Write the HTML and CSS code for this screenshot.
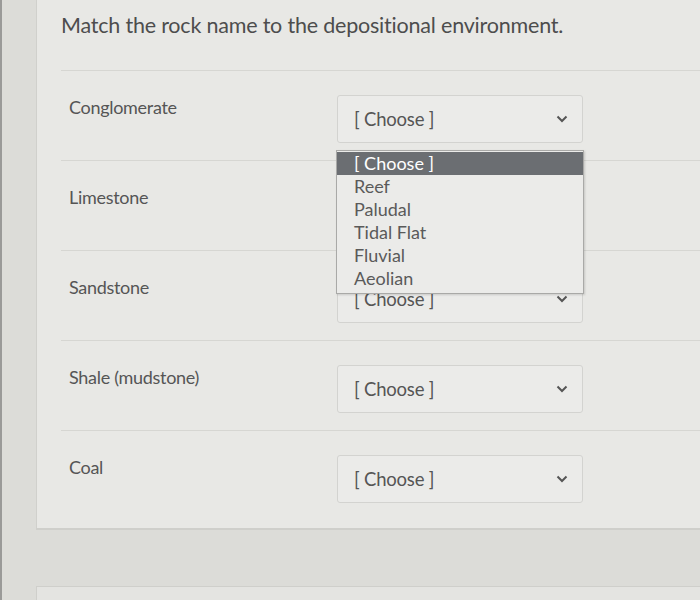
FILE: index.html
```html
<!DOCTYPE html>
<html>
<head>
<meta charset="utf-8">
<link rel="stylesheet" href="styles.css">
</head>
<body>
<div class="card">
  <h1 class="title">Match the rock name to the depositional environment.</h1>
  <div class="rows">
    <div class="row">
      <div class="label">Conglomerate</div>
      <div class="select-wrap">
        <div class="select"><span>[ Choose ]</span><svg class="chev" width="12" height="8" viewBox="0 0 12 8"><polyline points="1.5,1.5 6,6 10.5,1.5" fill="none" stroke="#555" stroke-width="2"/></svg></div>
        <ul class="menu">
          <li class="active">[ Choose ]</li>
          <li>Reef</li>
          <li>Paludal</li>
          <li>Tidal Flat</li>
          <li>Fluvial</li>
          <li>Aeolian</li>
        </ul>
      </div>
    </div>
    <div class="row">
      <div class="label">Limestone</div>
      <div class="select-wrap">
        <div class="select covered"><span>[ Choose ]</span><svg class="chev" width="12" height="8" viewBox="0 0 12 8"><polyline points="1.5,1.5 6,6 10.5,1.5" fill="none" stroke="#555" stroke-width="2"/></svg></div>
      </div>
    </div>
    <div class="row">
      <div class="label">Sandstone</div>
      <div class="select-wrap">
        <div class="select"><span>[ Choose ]</span><svg class="chev" width="12" height="8" viewBox="0 0 12 8"><polyline points="1.5,1.5 6,6 10.5,1.5" fill="none" stroke="#555" stroke-width="2"/></svg></div>
      </div>
    </div>
    <div class="row">
      <div class="label">Shale (mudstone)</div>
      <div class="select-wrap">
        <div class="select"><span>[ Choose ]</span><svg class="chev" width="12" height="8" viewBox="0 0 12 8"><polyline points="1.5,1.5 6,6 10.5,1.5" fill="none" stroke="#555" stroke-width="2"/></svg></div>
      </div>
    </div>
    <div class="row">
      <div class="label">Coal</div>
      <div class="select-wrap">
        <div class="select"><span>[ Choose ]</span><svg class="chev" width="12" height="8" viewBox="0 0 12 8"><polyline points="1.5,1.5 6,6 10.5,1.5" fill="none" stroke="#555" stroke-width="2"/></svg></div>
      </div>
    </div>
  </div>
</div>
<div class="card2"></div>
</body>
</html>
```
FILE: styles.css
```css
html, body {
  margin: 0;
  padding: 0;
  height: 600px;
  overflow: hidden;
}
body {
  background: #dcdcd8;
  font-family: Lato, "Open Sans", sans-serif;
  color: #555;
  border-left: 2px solid #9a9a98;
  box-sizing: border-box;
}
.card {
  margin-left: 34px;
  width: 700px;
  height: 530px;
  box-sizing: border-box;
  background: #e8e8e5;
  border-left: 1px solid #d0d0cc;
  border-bottom: 2px solid #cfcfcb;
  padding: 10px 0 0 24px;
}
.title {
  margin: 0;
  font-size: 21.5px;
  font-weight: 400;
  color: #4d4d4d;
  line-height: 30px;
  height: 60px;
  letter-spacing: -0.2px;
}
.row {
  display: flex;
  height: 90px;
  border-top: 1px solid #d6d6d2;
  box-sizing: border-box;
}
.label {
  width: 276px;
  padding: 25px 0 0 8px;
  box-sizing: border-box;
  font-size: 18px;
  color: #555;
  letter-spacing: -0.3px;
}
.select-wrap {
  position: relative;
  margin-top: 24px;
}
.select {
  width: 246px;
  height: 48px;
  box-sizing: border-box;
  border: 1px solid #d3d3d0;
  border-radius: 3px;
  background: #ebebe9;
  display: flex;
  align-items: center;
  justify-content: space-between;
  padding: 0 14px 0 16px;
  font-size: 18.5px;
  color: #555;
  letter-spacing: -0.2px;
}
.select.covered span {
  visibility: hidden;
}
.chev {
  display: block;
}
.menu {
  position: absolute;
  left: -1px;
  top: 55px;
  width: 246px;
  margin: 0;
  padding: 1px 0 3px;
  list-style: none;
  background: #ebebe9;
  border: 1px solid #a9a9a7;
  box-shadow: 1px 1px 2px rgba(0,0,0,0.15);
  z-index: 5;
}
.menu li {
  height: 23px;
  line-height: 23px;
  font-size: 18px;
  padding-left: 17px;
  color: #5a5a5a;
}
.menu li.active {
  background: #6b6e72;
  color: #fff;
}
.card2 {
  margin: 56px 0 0 34px;
  height: 40px;
  background: #e4e4e1;
  border-top: 1px solid #cfcfcb;
  border-left: 1px solid #cfcfcb;
}
```
